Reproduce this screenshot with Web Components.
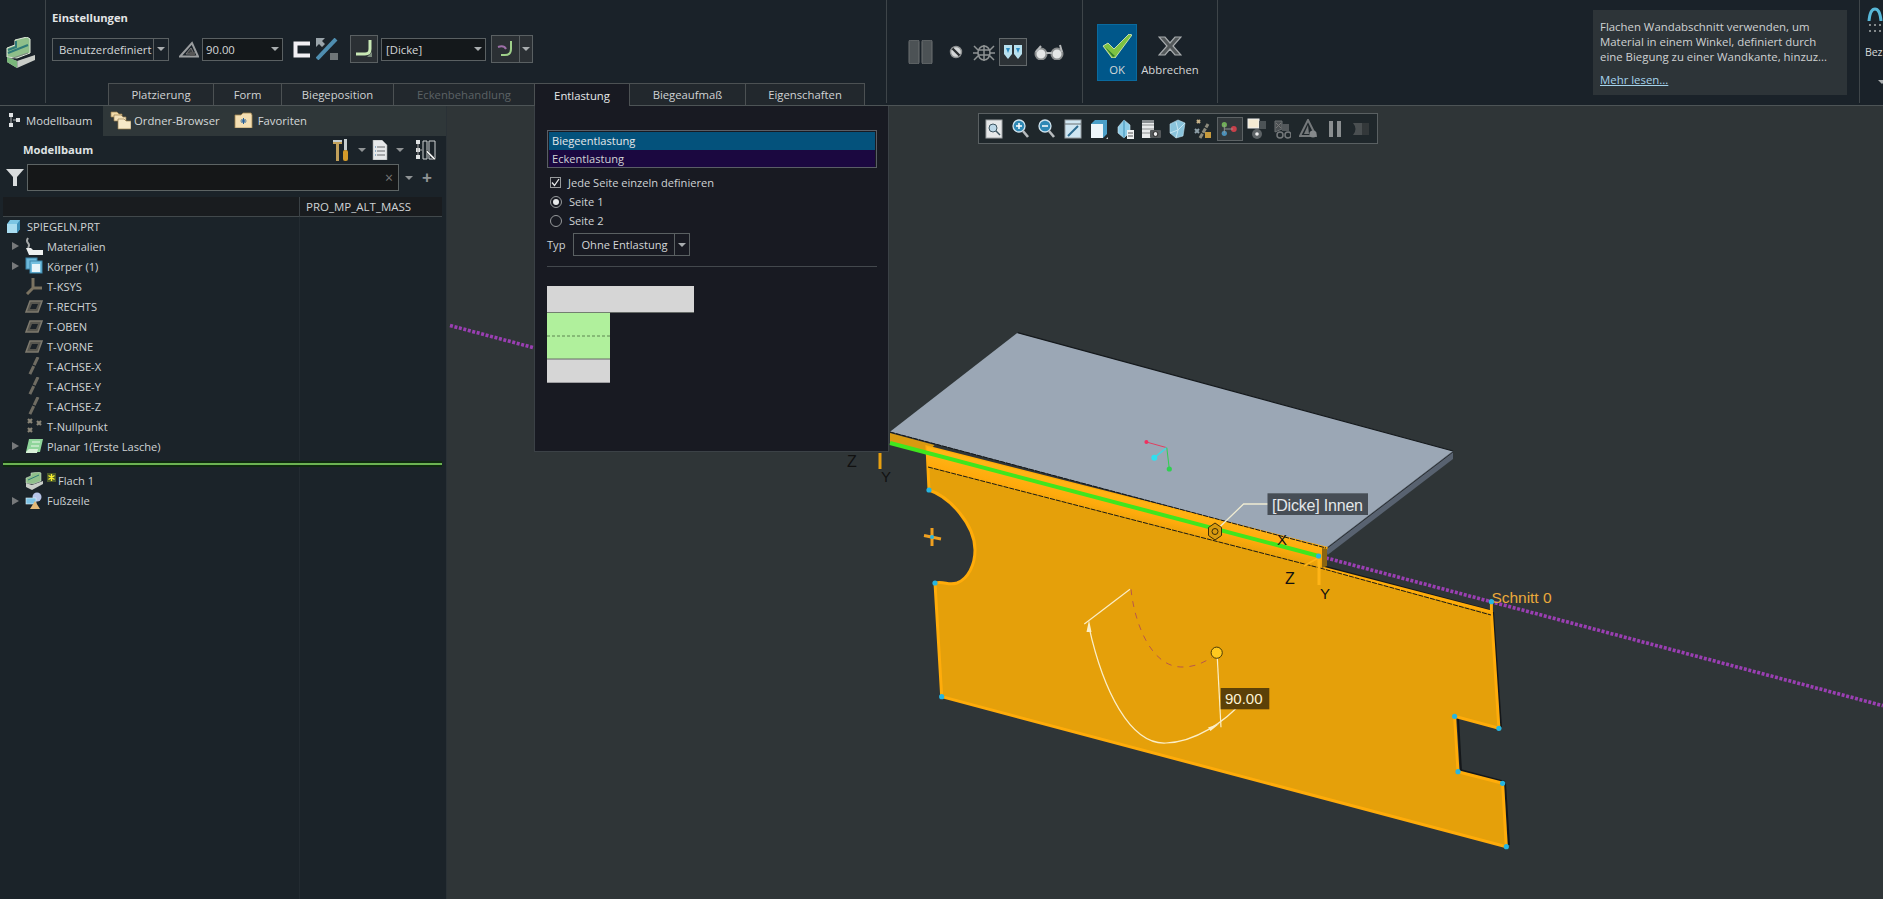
<!DOCTYPE html>
<html lang="de">
<head>
<meta charset="utf-8">
<title>Flach</title>
<style>
html,body{margin:0;height:100%;overflow:hidden;background:#2f3537}
body{font:11.3px "Open Sans","Noto Sans",sans-serif;color:#d4d7d8}
</style>
</head>
<body>
<cad-app></cad-app>
<script>
const ICONS = {
  flach: [32,32,`<path d="M3 20V11l8-3V3l12-3 3 2v14l-13 5z" fill="#8fbf8a" stroke="#dfeadb" stroke-width="1"/><path d="M12 4v6l-8 3M4 16l20-8" stroke="#2f7a78" stroke-width="2" fill="none"/><path d="M3 20l10 4 18-6v5l-18 8-10-6z" fill="#c9cdc8"/><path d="M13 24v7M6 22l18-6" stroke="#7d8480" fill="none"/><path d="M3 20v5l10 6v-7z" fill="#79b67a"/>`],
  angle: [20,17,`<path d="M1 15.5L13 2l6 13.5z" fill="none" stroke="#9a9d9f" stroke-width="2"/><path d="M7 13l5-6 3 6z" fill="#3c3f41" stroke="#777" /><path d="M11 11h5v4h-5z" fill="#555"/>`],
  cshape: [18,17,`<path d="M17 2.5H2.5v12H17" fill="none" stroke="#f2f0f4" stroke-width="4"/>`],
  flip: [22,22,`<path d="M1 21L20 1" stroke="#4f8eb0" stroke-width="4"/><path d="M0 0h9L6 3l3 3-3 3-3-3-3 3z" fill="#9aa4aa"/><rect x="14" y="15" width="8" height="7" fill="#6f7679"/>`],
  bend: [22,22,`<path d="M17 2v9q0 5-5 5H3" fill="none" stroke="#c9e8b5" stroke-width="3"/><path d="M14 19h5v-5z" fill="#7a8a7c"/>`],
  bendarc: [20,20,`<path d="M15 2v8q0 6-6 6H5" fill="none" stroke="#9fd08a" stroke-width="2"/><path d="M2 8q6-2 8 2" fill="none" stroke="#9d6fa8" stroke-width="2"/>`],
  pause: [26,24,`<rect x="1" y="0" width="10" height="24" rx="1.5" fill="#4c5255" stroke="#6c7173"/><rect x="14" y="0" width="10" height="24" rx="1.5" fill="#4c5255" stroke="#6c7173"/>`],
  stop: [14,14,`<circle cx="7" cy="7" r="5.5" fill="#d5d8d9" stroke="#8c8f90" stroke-width="1.4"/><path d="M3.5 3.5l7 7" stroke="#2a2e30" stroke-width="2.4"/>`],
  bug: [22,18,`<ellipse cx="11" cy="10" rx="6" ry="7" fill="none" stroke="#8f9394" stroke-width="1.6"/><path d="M11 2v16M5 7h12M5 12h12M1 3l4 4M21 3l-4 4M0 10h5M22 10h-5M1 17l4-4M21 17l-4-4" stroke="#8f9394" stroke-width="1.5" fill="none"/>`],
  preview: [20,16,`<path d="M1 1h8v9l-4 5-4-5z" fill="#b8e0ee"/><path d="M11 1h8v9l-4 5-4-5z" fill="#b8e0ee"/><path d="M3 4l2 5 2-5zM13 4l2 5 2-5z" fill="#2d8bc0"/>`],
  glasses: [30,16,`<circle cx="7" cy="10" r="5.5" fill="#e4e6e6" stroke="#8a8d8e" stroke-width="2"/><circle cx="23" cy="10" r="5.5" fill="#e4e6e6" stroke="#8a8d8e" stroke-width="2"/><path d="M12 9h6M2 8L7 2M28 8l-2-7" stroke="#b5b8b9" stroke-width="2" fill="none"/>`],
  check: [30,24,`<path d="M1 12l5-3 6 6L27 0l3 1-17 23h-3z" fill="#7dc242" stroke="#e8f0c0" stroke-width=".8"/><path d="M3 13l8 10 2-1z" fill="#2f7a30"/>`],
  cancel: [24,20,`<path d="M1 1h6l5 6 5-6h6l-8 9 8 9h-6l-5-6-5 6H1l8-9z" fill="#53585a" stroke="#a7abad" stroke-width="1.2"/>`],
  arch: [16,28,`<path d="M2 14Q3 2 8 2t6 12" fill="none" stroke="#58b8d8" stroke-width="3"/><path d="M2 18h2M7 18h2M12 18h2M2 24h2M7 24h2M12 24h2" stroke="#83898b" stroke-width="2"/>`],
  tree: [14,16,`<path d="M3 1h4v4H3zM3 11h4v4H3zM10 6h4v4h-4z" fill="#e0e3e4"/><path d="M5 5v6M7 8h3" stroke="#b0b4b6"/>`],
  folders: [21,19,`<path d="M1 6V1h6l2 2h3v3z" fill="#f0d9a8" stroke="#9a7f4e" stroke-width=".7"/><path d="M4 10V4h7l2 2h3v4z" fill="#f3e1ba" stroke="#9a7f4e" stroke-width=".7"/><path d="M8 18V8h6l2 2h5v8z" fill="#f6e8c8" stroke="#9a7f4e" stroke-width=".7"/>`],
  star: [19,16,`<path d="M1 3h6l2-2h8l1 2v13H1z" fill="#f4dfb3" stroke="#a68850" stroke-width=".8"/><path d="M9.5 6v6M6.5 9h6M7.5 7l4 4M11.5 7l-4 4" stroke="#235f9c" stroke-width="1"/>`],
  tools: [17,22,`<path d="M0 1h9v4H6v17H3V5H0z" fill="#c2a05a"/><path d="M0 1h9v2H0z" fill="#c7ced0"/><rect x="11" y="0" width="3" height="11" fill="#c7ced0"/><rect x="10" y="11" width="5" height="11" rx="2" fill="#d49a2a"/>`],
  doc: [16,20,`<path d="M1 0h9l5 5v15H1z" fill="#e6e8e9" stroke="#9a9d9e" stroke-width=".6"/><path d="M5 7h8M5 11h8M5 15h8" stroke="#66696b"/><path d="M3 7h1M3 11h1M3 15h1" stroke="#3b77a8"/>`],
  treecol: [22,20,`<path d="M1 0h4v4H1zM1 8h4v4H1zM1 15h4v4H1z" fill="#dfe2e3"/><path d="M3 4v11M5 10h2" stroke="#aaa"/><path d="M8 1h4v18H8zM14 1h6v18h-6z" fill="none" stroke="#cfd2d3"/><path d="M12 10l9 9-2 1-8-8z" fill="#e8eaea" stroke="#222" stroke-width=".5"/>`],
  filter: [18,17,`<path d="M0 0h18l-7 8v9H7V8z" fill="#d9dcdd"/>`],
  part: [15,15,`<path d="M1 5l3-4h10v9l-3 4H1z" fill="#7cc5e4"/><path d="M1 5h10v9H1z" fill="#a9dcf0"/><path d="M11 5l3-4v9l-3 4z" fill="#3e8fb8"/>`],
  material: [18,18,`<path d="M3 1q-2 3 0 5t0 5" fill="none" stroke="#a5a8a9" stroke-width="2"/><path d="M1 11h5l2 2h10v5H4z" fill="#eef0f0"/>`],
  bodies: [18,18,`<rect x="1" y="1" width="11" height="11" fill="#6db8da" stroke="#3d86aa"/><rect x="5" y="4" width="12" height="12" fill="#75c0e0" stroke="#3d86aa"/><rect x="7" y="7" width="8" height="8" fill="#e8f5fa"/>`],
  csys: [18,18,`<path d="M8 1v10L2 17M8 11h9" stroke="#7b7361" stroke-width="3" fill="none"/>`],
  plane: [18,13,`<path d="M5 1h12l-4 11H1z" fill="#57564f" stroke="#7e7a6e" stroke-width="1.5"/><path d="M7 4h6l-2 5H5z" fill="#1c2329"/>`],
  axis: [18,18,`<path d="M13 0L4.5 18" stroke="#6f6c62" stroke-width="3" stroke-dasharray="9 1"/>`],
  point: [18,16,`<path d="M3 1l4 4M7 1L3 5M12 3l4 4M16 3l-4 4M3 10l4 4M7 10l-4 4" stroke="#8a8577" stroke-width="2.2"/>`],
  planar: [18,16,`<path d="M4 1h14l-3 13H1z" fill="#8fd59a"/><path d="M7 4h8M6 8h8" stroke="#eaf7ea"/><path d="M1 14l3-3h9l-1 4H1z" fill="#d8efd8"/>`],
  flachs: [18,18,`<path d="M1 11V6l5-2V1l8-1 2 1v8l-8 3z" fill="#8fbf8a" stroke="#dfeadb" stroke-width=".5"/><path d="M1 11l6 2 11-4v3L7 18l-6-3z" fill="#c9cdc8"/><path d="M3 8l11-5" stroke="#2f7a78"/>`],
  newstar: [9,9,`<rect width="9" height="9" fill="#4b5a2a"/><path d="M4.5 1v7M1.5 2.5l6 4M7.5 2.5l-6 4" stroke="#f8f030" stroke-width="1.4"/>`],
  footer: [18,18,`<circle cx="12" cy="5" r="4.5" fill="#b7c4e8"/><rect x="1" y="6" width="10" height="6" fill="#7ec3e6" stroke="#e5f3fa" stroke-width=".6"/><path d="M10 9l5 8H5z" fill="#e4b878"/>`],
  zoomall: [18,20,`<rect x="1" y="1" width="16" height="18" fill="#e6e8e9" stroke="#a0a4a6"/><circle cx="8" cy="9" r="4" fill="#bcd8e8" stroke="#3e5560"/><path d="M11 12l4 4" stroke="#3e5560" stroke-width="1.5"/>`],
  zoomin: [18,20,`<circle cx="8" cy="7" r="6" fill="#2e88b5" stroke="#cfe3ee" stroke-width="1.3"/><path d="M5 7h6M8 4v6" stroke="#fff" stroke-width="1.5"/><path d="M12 12l5 6" stroke="#b8bcbe" stroke-width="2.6"/>`],
  zoomout: [18,20,`<circle cx="8" cy="7" r="6" fill="#2e88b5" stroke="#cfe3ee" stroke-width="1.3"/><path d="M5 7h6" stroke="#fff" stroke-width="1.5"/><path d="M12 12l5 6" stroke="#b8bcbe" stroke-width="2.6"/>`],
  refit: [18,20,`<rect x="1" y="1" width="16" height="18" fill="#cfe6f2" stroke="#9aa0a3"/><path d="M1 5h16" stroke="#6b7072"/><path d="M4 17L14 7" stroke="#2d6c90" stroke-width="2"/>`],
  cube: [18,20,`<path d="M1 5l4-4h12v14l-4 4H1z" fill="#4b9fc8"/><rect x="1" y="5" width="12" height="14" fill="#eef6fa"/><path d="M16 20l2-2v2z" fill="#c8cccd"/>`],
  display: [20,20,`<path d="M3 8l6-7 6 5v7l-6 6-6-5z" fill="#8fcde8" stroke="#d3eaf4" stroke-width=".6"/><path d="M9 1v18" stroke="#3d8fb8"/><rect x="12" y="11" width="7" height="9" fill="#eef0f1"/><path d="M13 14h5M13 17h5" stroke="#555"/>`],
  sheet: [20,20,`<rect x="1" y="1" width="12" height="18" fill="#e8eaeb"/><path d="M1 6h12M1 10h12M1 14h12" stroke="#8c8f90"/><path d="M1 1h12v3H1z" fill="#8a8f92"/><rect x="9" y="11" width="11" height="8" rx="1" fill="#55595b"/><circle cx="14.5" cy="15" r="2.4" fill="#eee" stroke="#222"/>`],
  crystal: [20,20,`<path d="M3 5l8-4 7 3-2 13-7 2-6-5z" fill="#8ac4dc" stroke="#bfe0ee" stroke-width=".6"/><path d="M9 3l2 8 7-7M11 11l-2 8M11 11L3 14" stroke="#c8e7f2" fill="none"/>`],
  datum: [20,20,`<path d="M3 1l3 3M6 1L3 4" stroke="#c9b48a" stroke-width="2"/><path d="M6 19L14 5" stroke="#8c8a7c" stroke-width="3" stroke-dasharray="5 1"/><path d="M11 13h6v6h-6z" fill="#c79a3d"/><path d="M1 10l4 4M5 10l-4 4" stroke="#8fa0a8" stroke-width="2"/>`],
  sel: [22,20,`<circle cx="5" cy="5" r="3" fill="#6fae56"/><circle cx="5" cy="15" r="3" fill="#4a8fb8"/><circle cx="16" cy="10" r="3.4" fill="#c9404a"/><path d="M5 5v10M5 10h10" stroke="#999"/>`],
  display2: [22,22,`<rect x="3" y="1" width="11" height="9" fill="#f4ead2" stroke="#eee"/><path d="M14 3h7v8h-7z" fill="#4c5356"/><circle cx="12" cy="16" r="5" fill="#5d6366"/><circle cx="12" cy="16" r="1.8" fill="#eee"/>`],
  dim1: [18,20,`<path d="M2 2h7v8l-7 3z" fill="#4b5053" stroke="#6c7072"/><path d="M3 4l5 5M8 4l-5 5" stroke="#777"/><circle cx="7" cy="16" r="3" fill="none" stroke="#75797b" stroke-width="1.5"/><circle cx="15" cy="16" r="3" fill="none" stroke="#75797b" stroke-width="1.5"/><path d="M9 5h7v7H9z" fill="#53585b"/>`],
  dim2: [18,20,`<path d="M9 1L1 17h16z" fill="none" stroke="#75797b" stroke-width="2"/><path d="M9 6l-4 9h5z" fill="#75797b"/><circle cx="14" cy="15" r="3.6" fill="#85898b"/>`],
  mpause: [14,16,`<rect x="1" y="0" width="4" height="16" fill="#8a8e90"/><rect x="9" y="0" width="4" height="16" fill="#8a8e90"/>`],
  msweep: [18,14,`<path d="M1 1h16v12H1q5-6 0-12z" fill="#4a4f51"/><path d="M10 1h7v12h-7z" fill="#33383a"/>`]
};

const svgOf = (name, w, h) => {
  const [vw, vh, inner] = ICONS[name];
  return `<svg width="${w || vw}" height="${h || vh}" viewBox="0 0 ${vw} ${vh}">${inner}</svg>`;
};

class CadIcon extends HTMLElement {
  connectedCallback() {
    const w = this.getAttribute('w'), h = this.getAttribute('h');
    this.attachShadow({mode: 'open'}).innerHTML = `<style>:host{display:inline-flex;flex:none;line-height:0}</style>${svgOf(this.getAttribute('name'), w, h)}`;
  }
}
customElements.define('cad-icon', CadIcon);

// combobox from the ribbon and the dialog
class CadCombo extends HTMLElement {
  connectedCallback() {
    const w = this.getAttribute('w'), h = this.getAttribute('h') || 23, pad = this.getAttribute('pad') || 6, arrow = this.getAttribute('arrow') || 15;
    this.attachShadow({mode: 'open'}).innerHTML = `
      <style>
        :host{display:inline-flex;flex:none;box-sizing:border-box;width:${w}px;height:${h}px;border:1px solid #5a6062;background:${this.getAttribute('bg') || 'transparent'};color:#d4d7d8;align-items:center}
        .t{flex:1;padding-left:${pad}px;white-space:nowrap;overflow:hidden}
        .a{width:${arrow}px;height:100%;box-sizing:border-box;border-left:1px solid #5a6062;display:flex;align-items:center;justify-content:center}
        .a i{border:4px solid transparent;border-top:4px solid #a9adaf;border-bottom:0}
        :host([flat]) .a{border-left:0}
      </style>
      <div class="t"><slot></slot></div><div class="a"><i></i></div>`;
  }
}
customElements.define('cad-combo', CadCombo);

class RibbonTab extends HTMLElement {
  connectedCallback() {
    this.attachShadow({mode: 'open'}).innerHTML = `
      <style>
        :host{display:flex;flex:none;box-sizing:border-box;height:22px;width:${this.getAttribute('w')}px;align-items:center;justify-content:center;border:1px solid #4c5153;border-bottom:0;margin-right:-1px;background:#22282d;color:#d0d3d4}
        :host([off]){color:#5c6265}
        :host([active]){background:#181a22;color:#e6e8e9;height:23px;margin-bottom:-1px;position:relative;z-index:2}
      </style><slot></slot>`;
  }
}
customElements.define('ribbon-tab', RibbonTab);

class CadRibbon extends HTMLElement {
  connectedCallback() {
    this.attachShadow({mode: 'open'}).innerHTML = `
      <style>
        :host{display:flex;box-sizing:border-box;height:106px;background:#1a2229;border-bottom:1px solid #4d5456;position:relative;z-index:3}
        .sec{border-right:1px solid #3e4549;height:103px;box-sizing:border-box;flex:none}
        .brand{width:46px;padding:37px 0 0 4px}
        .settings{width:841px;padding:10px 0 0 6px;border-right:0;position:relative}
        .settings::after{content:"";position:absolute;right:0;top:0;height:103px;width:1px;background:#3e4549}
        .title{font-weight:700;line-height:16px;color:#e3e5e6;font-size:11.2px}
        .row{display:flex;align-items:center;height:28px;margin-top:9px}
        .btn{display:flex;box-sizing:border-box;align-items:center;justify-content:center;height:28px;border:1px solid #5a6062;background:#2b3034;flex:none}
        .split{display:flex;height:28px;box-sizing:border-box;border:1px solid #5a6062;background:#2b3034;width:42px;margin-left:5px}
        .split div{display:flex;align-items:center;justify-content:center}
        .split .l{width:27px;border-right:1px solid #5a6062}
        .split .r{flex:1}
        .split i{border:4px solid transparent;border-top:4px solid #a9adaf;border-bottom:0}
        .tabs{display:flex;margin:20px 0 0 56px}
        .modes{width:196px;display:flex;align-items:center;padding-left:21px}
        .active{width:28px;height:28px;box-sizing:border-box;border:1px solid #62686a;background:#2c3236;display:flex;align-items:center;justify-content:center;margin-left:4px;margin-right:7px}
        .actions{width:135px;display:flex;padding:24px 0 0 14px}
        .ok{width:40px;height:57px;background:#00578a;box-sizing:border-box;padding-top:9px;display:flex;flex-direction:column;align-items:center;border:1px solid #0a6a9e}
        .ok span,.cancel span{position:absolute;top:62px;line-height:16px}
        .cancel{width:58px;margin-left:4px;display:flex;flex-direction:column;align-items:center;padding-top:12px}
        .end{flex:none;width:24px;box-sizing:border-box;border-left:1px solid #3e4549;height:103px;padding-left:7px;position:relative;overflow:hidden;white-space:nowrap}
        .end span{position:absolute;left:5px;top:44px;line-height:16px;font-size:10.6px;letter-spacing:-.2px}
        .end cad-icon{margin-top:7px}
        .end i{position:absolute;left:18px;top:80px;border:4px solid transparent;border-top:4px solid #a9adaf}
        .grow{flex:1;display:flex;justify-content:flex-end}
      </style>
      <div class="sec brand"><cad-icon name="flach"></cad-icon></div>
      <div class="sec settings">
        <div class="title">Einstellungen</div>
        <div class="row">
          <cad-combo w="117">Benutzerdefiniert</cad-combo>
          <cad-icon name="angle" style="margin:0 3px 0 10px"></cad-icon>
          <cad-combo w="81" pad="3" arrow="15" bg="#14181b" flat>90.00</cad-combo>
          <cad-icon name="cshape" style="margin-left:10px"></cad-icon>
          <cad-icon name="flip" style="margin:0 12px 0 5px"></cad-icon>
          <div class="btn" style="width:28px"><cad-icon name="bend"></cad-icon></div>
          <cad-combo w="105" pad="4" arrow="15" bg="#14181b" style="margin-left:3px" flat>[Dicke]</cad-combo>
          <div class="split"><div class="l"><cad-icon name="bendarc"></cad-icon></div><div class="r"><i></i></div></div>
        </div>
        <div class="tabs">
          <ribbon-tab w="106">Platzierung</ribbon-tab>
          <ribbon-tab w="69">Form</ribbon-tab>
          <ribbon-tab w="113">Biegeposition</ribbon-tab>
          <ribbon-tab w="142" off>Eckenbehandlung</ribbon-tab>
          <ribbon-tab w="96" active>Entlastung</ribbon-tab>
          <ribbon-tab w="117">Biegeaufmaß</ribbon-tab>
          <ribbon-tab w="120">Eigenschaften</ribbon-tab>
        </div>
      </div>
      <div class="sec modes">
        <cad-icon name="pause"></cad-icon>
        <cad-icon name="stop" style="margin:0 10px 0 15px"></cad-icon>
        <cad-icon name="bug"></cad-icon>
        <div class="active"><cad-icon name="preview"></cad-icon></div>
        <cad-icon name="glasses"></cad-icon>
      </div>
      <div class="sec actions">
        <div class="ok"><cad-icon name="check"></cad-icon><span>OK</span></div>
        <div class="cancel"><cad-icon name="cancel"></cad-icon><span>Abbrechen</span></div>
      </div>
      <div class="grow"><help-tip style="margin:10px 12px 0 0">Flachen Wandabschnitt verwenden, um<br>Material in einem Winkel, definiert durch<br>eine Biegung zu einer Wandkante, hinzuz...<span slot="link">Mehr lesen...</span></help-tip></div>
      <div class="end"><cad-icon name="arch"></cad-icon><span>Bez</span><i></i></div>`;
  }
}
customElements.define('cad-ribbon', CadRibbon);

class HelpTip extends HTMLElement {
  connectedCallback() {
    this.attachShadow({mode: 'open'}).innerHTML = `
      <style>
        :host{display:block;box-sizing:border-box;width:254px;height:85px;background:#2d3438;padding:9px 7px;line-height:15.2px;font-size:11.4px;color:#cfd2d3;white-space:nowrap;overflow:hidden}
        .link{margin-top:7px;color:#a5d3ec;text-decoration:underline}
      </style><slot></slot><div class="link"><slot name="link"></slot></div>`;
  }
}
customElements.define('help-tip', HelpTip);

class TreeRow extends HTMLElement {
  connectedCallback() {
    const a = this.hasAttribute('arrow');
    const lvl = this.getAttribute('lvl') || 1;
    const star = this.hasAttribute('star');
    this.attachShadow({mode: 'open'}).innerHTML = `
      <style>
        :host{display:flex;height:20px;align-items:center;white-space:nowrap;color:#cfd3d5;font-size:11.1px}
        .gut{width:${lvl == 0 ? 6 : 25}px;flex:none;display:flex;align-items:center;padding-left:${lvl == 0 ? 0 : 12}px;box-sizing:border-box}
        .gut i{border:4px solid transparent;border-left:7px solid #77797b;border-right:0}
        .ic{width:${lvl == 0 ? 21 : 22}px;display:flex;flex:none;align-items:center}
        .st{margin:-6px 2px 0 0;display:flex}
      </style>
      <div class="gut">${a ? '<i></i>' : ''}</div><div class="ic"><cad-icon name="${this.getAttribute('icon')}"></cad-icon></div>${star ? '<div class="st"><cad-icon name="newstar"></cad-icon></div>' : ''}<slot></slot>`;
  }
}
customElements.define('tree-row', TreeRow);

class ModelPanel extends HTMLElement {
  connectedCallback() {
    this.attachShadow({mode: 'open'}).innerHTML = `
      <style>
        :host{display:flex;flex-direction:column;flex:none;width:447px;background:#1b2329;border-right:1px solid #2a3136;box-sizing:border-box}
        .tabs{display:flex;height:30px;background:#2f3739;align-items:center;flex:none}
        .tab{display:flex;align-items:center;height:100%;box-sizing:border-box;white-space:nowrap;padding-bottom:2px}
        .tab.on{width:103px;background:#1b2329;padding-left:6px;gap:6px}
        .off{margin-left:7px;gap:3px}
        .head{height:28px;display:flex;align-items:center;padding:0 0 0 23px;flex:none;box-sizing:border-box}
        .head b{flex:1;font-size:11.2px;color:#dfe2e3;margin-top:-2px}
        .head cad-icon{margin-right:4px}
        i.arr{border:4px solid transparent;border-top:4px solid #8f9395;border-bottom:0;margin:0 11px 0 8px}
        .filter{display:flex;align-items:center;height:27px;flex:none;padding-left:6px}
        .box{width:372px;height:27px;box-sizing:border-box;margin-left:3px;background:#151718;border:1px solid #5d6464;color:#777;display:flex;align-items:center;justify-content:flex-end;padding-right:5px;font-size:14px}
        .plus{color:#8f9395;font:700 17px "Liberation Sans",sans-serif;margin-left:9px}
        .cols{display:grid;grid-template-columns:296px 143px;margin:6px 0 0 3px;height:20px;background:#191c1f;border-bottom:1px solid #41484b;box-sizing:border-box;flex:none;width:439px;font-size:11.5px}
        .cols div+div{border-left:1px solid #3a4145;padding-left:6px;line-height:20px;color:#cfd3d5}
        .body{flex:1;position:relative}
        .body::before{content:"";position:absolute;left:299px;top:0;bottom:0;width:1px;background:#232b31}
        .rows{margin-top:-1px;position:relative}
        .ins{height:6px;margin:4.5px 4px 4px 3px;background:#0f2a10;display:flex;align-items:center}
        .ins::before{content:"";flex:1;height:2px;background:#6cb352}
      </style>
      <div class="tabs">
        <div class="tab on"><cad-icon name="tree"></cad-icon><span>Modellbaum</span></div>
        <div class="tab off"><cad-icon name="folders"></cad-icon><span>Ordner-Browser</span></div>
        <div class="tab off" style="margin-left:14px;gap:5px"><cad-icon name="star"></cad-icon><span>Favoriten</span></div>
      </div>
      <div class="head"><b>Modellbaum</b><cad-icon name="tools"></cad-icon><i class="arr" style="margin-left:4px;margin-right:6px"></i><cad-icon name="doc"></cad-icon><i class="arr" style="margin-left:4px;margin-right:11px"></i><cad-icon name="treecol" style="margin-right:9px"></cad-icon></div>
      <div class="filter"><cad-icon name="filter"></cad-icon><div class="box">×</div><i class="arr" style="margin:0 0 0 6px"></i><span class="plus">+</span></div>
      <div class="cols"><div></div><div>PRO_MP_ALT_MASS</div></div>
      <div class="body"><div class="rows">
        <tree-row lvl="0" icon="part">SPIEGELN.PRT</tree-row>
        <tree-row arrow icon="material">Materialien</tree-row>
        <tree-row arrow icon="bodies">Körper (1)</tree-row>
        <tree-row icon="csys">T-KSYS</tree-row>
        <tree-row icon="plane">T-RECHTS</tree-row>
        <tree-row icon="plane">T-OBEN</tree-row>
        <tree-row icon="plane">T-VORNE</tree-row>
        <tree-row icon="axis">T-ACHSE-X</tree-row>
        <tree-row icon="axis">T-ACHSE-Y</tree-row>
        <tree-row icon="axis">T-ACHSE-Z</tree-row>
        <tree-row icon="point">T-Nullpunkt</tree-row>
        <tree-row arrow icon="planar">Planar 1(Erste Lasche)</tree-row>
        <div class="ins"></div>
        <tree-row icon="flachs" star>Flach 1</tree-row>
        <tree-row arrow icon="footer">Fußzeile</tree-row>
      </div></div>`;
  }
}
customElements.define('model-panel', ModelPanel);

class MiniToolbar extends HTMLElement {
  connectedCallback() {
    const names = ['zoomall','zoomin','zoomout','refit','cube','display','sheet','crystal','datum','sel','display2','dim1','dim2','mpause','msweep'];
    const items = names.map(n => n === 'sel'
      ? `<span class="i on"><cad-icon name="${n}" w="19" h="18"></cad-icon></span>`
      : `<span class="i"><cad-icon name="${n}"></cad-icon></span>`).join('');
    this.attachShadow({mode: 'open'}).innerHTML = `
      <style>
        :host{position:absolute;left:531px;top:7px;display:flex;align-items:center;box-sizing:border-box;width:400px;height:31px;background:#1f272b;border:1px solid #5a6062;padding-left:2px}
        .i{width:26.2px;height:24px;display:flex;align-items:center;justify-content:center;flex:none;box-sizing:border-box}
        .on{border:1px solid #5c6264;background:#33393c}
      </style>${items}`;
  }
}
customElements.define('mini-toolbar', MiniToolbar);

// the model, drawn in window coordinates on the free canvas of the graphics area
class GraphicsView extends HTMLElement {
  connectedCallback() {
    const verts = [[929,490],[935,583],[941.7,696.7],[1506.3,846.7],[1502.6,783.3],[1458,771.7],[1454.6,716.3],[1498.9,728.3],[1491.4,601.7],[1318.6,556]];
    const flange = 'M927,447 L1326,548 L1322,568 L1491.4,612 L1498.9,728.3 L1454.6,716.3 L1458,771.7 L1502.6,783.3 L1506.3,846.7 L941.7,696.7 L935,583 C945,581 948,586 957,583 C968,579 975,565 975,550 C975,525 950,497 929,490 Z';
    this.attachShadow({mode: 'open'}).innerHTML = `
      <style>
        :host{display:block;flex:1;position:relative;background:#2f3537;overflow:hidden;min-width:0}
        svg{display:block}
        text{font-family:"Liberation Sans",sans-serif}
      </style>
      <svg width="1436" height="793" viewBox="447 106 1436 793">
        <defs>
          <linearGradient id="band" gradientUnits="userSpaceOnUse" x1="1100" y1="490" x2="1094" y2="516">
            <stop offset="0" stop-color="#ffb416"/><stop offset=".55" stop-color="#ffaa0c"/><stop offset="1" stop-color="#e5a00a"/>
          </linearGradient>
        </defs>
        <path d="M450,325.5 L1883,705.7" stroke="#9a3fb2" stroke-width="3.6" stroke-dasharray="3 1.6"/>
        <path d="M1326,548 L1453,451 L1453,459 L1327.5,555 Z" fill="#586270"/>
        <path d="M1326,549 L1453,452" stroke="#2a2f33" stroke-width="1"/>
        <path d="M1017.5,332.7 L890,431.7 L1326,548 L1453,451 Z" fill="#9ba7b5"/>
        <path d="M1017.5,332.7 L1453,451" stroke="#15191c" stroke-width="1.2"/>
        <path d="M890,433 L934.6,445 L927,453 L890,444 Z" fill="#d99a10"/>
        <path d="M1322,566 L1492,611 M1493,612 L1501,727 M1458,718 L1461,771 M1460,770 L1505,782 M1505,783 L1509,845 M957,584 L935,584" stroke="#14171a" stroke-width="2" fill="none"/>
        <path d="${flange}" fill="#e5a00a" stroke="#ffac0a" stroke-width="3"/>
        <path d="M927,447 L1326,548 L1322,568 L928,467 Z" fill="url(#band)"/>
        <path d="M1491.4,612 L1491.4,602" stroke="#ffac0a" stroke-width="3"/>
        <path d="M1322,548 L1327,549 L1327,566 L1322,568 Z" fill="#8a6512"/>
        <path d="M890,432 L1326,548" stroke="#14171a" stroke-width="1" stroke-dasharray="5 1"/>
        <path d="M928,467 L1320,568 M1320,568 L1491,615" stroke="#1b1a12" stroke-width="1" stroke-dasharray="5 1" fill="none"/>
        <path d="M890,443 L1318.6,556" stroke="#40e61e" stroke-width="4"/>
        <path d="M880,453 V469" stroke="#e8a010" stroke-width="3"/>
        <path d="M1319,559 V585" stroke="#ffb416" stroke-width="3"/>
        <path d="M1304,566 L1318,558" stroke="#ffb416" stroke-width="1.5"/>
        <path d="M932,528 V546 M924,535.5 L941,539" stroke="#f0a020" stroke-width="3"/>
        <path d="M1166.8,447.7 L1146.4,442" stroke="#e04060"/><circle cx="1146.4" cy="442" r="2" fill="#f03060"/>
        <path d="M1166.8,447.7 L1154.3,457.7" stroke="#40d8e0" stroke-width="1.5"/><circle cx="1154.3" cy="457.7" r="3" fill="#30e0f0"/>
        <path d="M1166.8,447.7 L1169.3,469" stroke="#30d050"/><circle cx="1169.3" cy="469" r="2.6" fill="#30d050"/>
        <path d="M1084.3,624 L1130,589.3" stroke="#fbeec8" stroke-width="1.2"/>
        <path d="M1131,589.3 C1134,620 1150,668 1183,667 C1195,667 1205,662 1212,657" fill="none" stroke="#b8584a" stroke-width="1" stroke-dasharray="6 6"/>
        <path d="M1089,627 C1103,690 1130,745 1166,743 C1195,742 1225,722 1244,700" fill="none" stroke="#fbeec8" stroke-width="1.2"/>
        <path d="M1089,620 L1086.5,632 L1091.5,632 Z M1219,724 L1208,727.5 L1210.5,731 Z" fill="#fbeec8"/>
        <path d="M1217.3,658 L1221,727.3" stroke="#fbeec8" stroke-width="1.2"/>
        <circle cx="1216.7" cy="652.7" r="5.6" fill="#ffc81e" stroke="#4a3a08"/>
        <rect x="1220.7" y="688" width="48.6" height="21.3" fill="#5c4108"/>
        <text x="1225" y="704" font-size="15" fill="#fff3d4">90.00</text>
        <path d="M1218.6,528 L1243.6,504 H1268" stroke="#f0ecd2" stroke-width="1.3" fill="none"/>
        <path d="M1215,523 l6.5,4.5 v8 l-6.5,4.5 l-6.5,-4.5 v-8 Z" fill="#d89a10" stroke="#3a2c08"/>
        <circle cx="1215" cy="531.5" r="3" fill="none" stroke="#3a2c08"/>
        <rect x="1267.5" y="493.3" width="100.5" height="21.7" fill="#464d55"/>
        <text x="1272" y="510.5" font-size="16" fill="#e4e7ea" textLength="91">[Dicke] Innen</text>
        <text x="1277" y="545" font-size="15" fill="#111">X</text>
        <text x="1285" y="584" font-size="16" fill="#111">Z</text>
        <text x="1320" y="599" font-size="15" fill="#111">Y</text>
        <text x="847" y="467" font-size="16" fill="#111">Z</text>
        <text x="881" y="482" font-size="15" fill="#111">Y</text>
        <text x="1491.5" y="603" font-size="15.5" fill="#eaa93a" textLength="60">Schnitt 0</text>
        ${verts.map(([x, y]) => `<circle cx="${x}" cy="${y}" r="2.6" fill="#27b5e0"/>`).join('')}
        <circle cx="932" cy="537" r="2" fill="#27b5e0"/>
      </svg>
      <mini-toolbar></mini-toolbar>`;
  }
}
customElements.define('graphics-view', GraphicsView);

class ReliefDialog extends HTMLElement {
  connectedCallback() {
    this.attachShadow({mode: 'open'}).innerHTML = `
      <style>
        :host{position:absolute;left:534px;top:105px;z-index:2;display:block;box-sizing:border-box;width:355px;height:347px;background:#181a22;border:1px solid #3b4146;padding:24px 12px 0;font-size:11.1px;color:#cfd3d5}
        .list{width:330px;height:38px;box-sizing:border-box;border:1px solid #5a5e66;padding:1px;background:#181a22;line-height:17px}
        .list div{height:17.5px;padding-left:3px;box-sizing:border-box}
        .sel{background:#04527c;color:#e4e8ea}
        .alt{background:#1b0840}
        .opt{display:flex;align-items:center;height:19px}
        .chk{width:11px;height:11px;border:1px solid #96999b;box-sizing:border-box;margin:0 7px 0 3px;display:flex}
        .rad{width:12px;height:12px;border-radius:50%;border:1px solid #96999b;box-sizing:border-box;margin:0 7px 0 3px;display:flex;align-items:center;justify-content:center}
        .rad i{width:6px;height:6px;border-radius:50%;background:#e8eaeb}
        .typ{display:flex;align-items:center;margin-top:3px;gap:8px}
        hr{border:0;height:1px;background:#43484d;margin:10px 0 0;width:330px}
        .preview{margin-top:19px;width:147px;display:block}
      </style>
      <div class="list"><div class="sel">Biegeentlastung</div><div class="alt">Eckentlastung</div></div>
      <div style="height:5px"></div>
      <div class="opt"><span class="chk"><svg width="9" height="9" viewBox="0 0 9 9"><path d="M1 4.5l2.5 3L8 1" fill="none" stroke="#e8eaeb" stroke-width="1.3"/></svg></span>Jede Seite einzeln definieren</div>
      <div class="opt"><span class="rad"><i></i></span>Seite 1</div>
      <div class="opt"><span class="rad"></span>Seite 2</div>
      <div class="typ">Typ<cad-combo w="117" pad="7" arrow="15">Ohne Entlastung</cad-combo></div>
      <hr>
      <svg class="preview" width="147" height="97" viewBox="0 0 147 97">
        <rect width="147" height="26.3" fill="#d6d6d6"/>
        <rect y="26.3" width="63" height="46.7" fill="#b0f09c"/>
        <path d="M0 26.5H147" stroke="#6a6e6a" stroke-width=".8"/>
        <path d="M0 50H63" stroke="#4a6a40" stroke-width=".8" stroke-dasharray="3 2"/>
        <path d="M0 73H63" stroke="#6a7068"/>
        <rect y="73.4" width="63" height="23.3" fill="#d6d6d6"/>
      </svg>`;
  }
}
customElements.define('relief-dialog', ReliefDialog);

class CadApp extends HTMLElement {
  connectedCallback() {
    this.attachShadow({mode: 'open'}).innerHTML = `
      <style>
        :host{display:flex;flex-direction:column;position:relative;width:1883px;height:899px;overflow:hidden}
        main{display:flex;flex:1;min-height:0}
      </style>
      <cad-ribbon></cad-ribbon>
      <main><model-panel></model-panel><graphics-view></graphics-view></main>
      <relief-dialog></relief-dialog>`;
  }
}
customElements.define('cad-app', CadApp);
</script>
</body>
</html>
